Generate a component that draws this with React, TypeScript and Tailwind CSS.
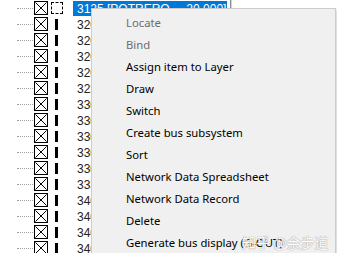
import React from "react";

const rows = [
  "3125 [POTRERO     20.000]",
  "3201",
  "3202",
  "3203",
  "3204",
  "3221",
  "3301",
  "3302",
  "3303",
  "3304",
  "3305",
  "3333",
  "3401",
  "3402",
  "3403",
  "3404",
];

const items: { label: string; disabled?: boolean }[] = [
  { label: "Locate", disabled: true },
  { label: "Bind", disabled: true },
  { label: "Assign item to Layer" },
  { label: "Draw" },
  { label: "Switch" },
  { label: "Create bus subsystem" },
  { label: "Sort" },
  { label: "Network Data Spreadsheet" },
  { label: "Network Data Record" },
  { label: "Delete" },
  { label: "Generate bus display (G-OUT)" },
];

function CheckX() {
  return (
    <svg width="14" height="14" viewBox="0 0 14 14" className="shrink-0">
      <rect x="0.5" y="0.5" width="13" height="13" fill="white" stroke="black" strokeWidth="1" />
      <line x1="1.5" y1="1.5" x2="12.5" y2="12.5" stroke="black" strokeWidth="1" />
      <line x1="12.5" y1="1.5" x2="1.5" y2="12.5" stroke="black" strokeWidth="1" />
    </svg>
  );
}

export default function App() {
  return (
    <div className="relative w-[337px] h-[253px] overflow-hidden bg-white">
      <div className="flex h-full">
        <div className="w-[230px] flex flex-col" style={{ fontFamily: '"Liberation Sans", Arial, sans-serif' }}>
          {rows.map((r, i) => (
            <div key={i} className="h-[16px] flex items-center shrink-0">
              <div className="w-[17px] shrink-0" />
              <div className="w-[16px] shrink-0 border-t border-dotted border-[#a0a0a0]" />
              <div className="ml-[1px] shrink-0">
                <CheckX />
              </div>
              <div className="w-[25px] shrink-0 flex items-center">
                {i === 0 ? (
                  <div className="w-[12px] h-[12px] border border-dashed border-black ml-[3px]" />
                ) : (
                  <div className="w-[3px] h-[11px] bg-black ml-[7px]" />
                )}
              </div>
              <div
                className={
                  "h-[15px] flex items-center pl-[4px] pt-[1px] text-[12px] whitespace-pre overflow-hidden " +
                  (i === 0 ? "bg-[#0078d7] text-white w-[154px]" : "text-[#222222] w-[18px]")
                }
              >
                {r}
              </div>
            </div>
          ))}
        </div>
        <div className="w-px bg-[#8c8c8c]" />
        <div className="w-px bg-[#d4d4d4]" />
        <div className="flex-1 bg-white" />
      </div>

      <div
        className="absolute left-[91px] top-[8px] w-[245px] h-[260px] bg-[#f0f0f0] border border-[#cccccc] pt-[3px] shadow-[2px_2px_3px_rgba(0,0,0,0.15)]"
        style={{ fontFamily: '"Noto Sans", "Open Sans", sans-serif' }}
      >
        {items.map((it) => (
          <div
            key={it.label}
            className={
              "h-[22px] flex items-center pl-[34px] text-[11.3px] whitespace-nowrap " +
              (it.disabled ? "text-[#6d6d6d]" : "text-black")
            }
          >
            {it.label}
          </div>
        ))}
      </div>

      <div
        className="absolute left-[242px] top-[232px] text-[14px] text-white whitespace-nowrap"
        style={{
          fontFamily: '"Noto Sans CJK SC", "Noto Sans", sans-serif',
          textShadow: "0 0 1px #9a9a9a, 0 0 1px #9a9a9a",
        }}
      >
        知乎 @余步道
      </div>
    </div>
  );
}
